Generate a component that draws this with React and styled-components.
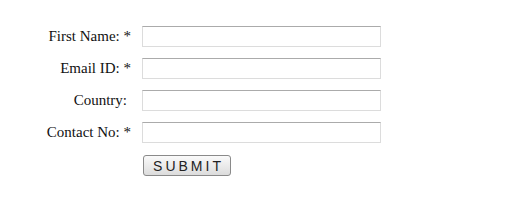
import React from 'react'
import styled, { createGlobalStyle } from 'styled-components'

const Global = createGlobalStyle`
  html, body {
    margin: 0;
    background: #fff;
  }
`

const fields = [
  { label: 'First Name:', required: true },
  { label: 'Email ID:', required: true },
  { label: 'Country:', required: false },
  { label: 'Contact No:', required: true },
]

const App = () => {
  return (
    <Page>
      <Global />
      <Form onSubmit={e => e.preventDefault()}>
        {fields.map(f => (
          <React.Fragment key={f.label}>
            <Label $required={f.required}>
              {f.label}
              {f.required && ' *'}
            </Label>
            <Input type="text" />
          </React.Fragment>
        ))}
        <span />
        <Submit type="submit">SUBMIT</Submit>
      </Form>
    </Page>
  )
}

export default App

const Page = styled.div`
  width: 530px;
  height: 208px;
  padding-top: 26px;
  box-sizing: border-box;
`

const Form = styled.form`
  display: grid;
  grid-template-columns: 131px 239px;
  column-gap: 11px;
  row-gap: 11px;
  align-items: center;
`

const Label = styled.label`
  text-align: right;
  font-family: 'Liberation Serif', 'Times New Roman', serif;
  font-size: 15px;
  color: #111;
  white-space: nowrap;
  padding-right: ${p => (p.$required ? '0' : '4px')};
`

const Input = styled.input`
  height: 21px;
  box-sizing: border-box;
  margin: 0;
  border: 1px solid #dcdcdc;
  border-top-color: #ababab;
  background: #fff;
  padding: 0 3px;
`

const Submit = styled.button`
  justify-self: start;
  margin: 1px 0 0 1px;
  width: 88px;
  height: 21px;
  box-sizing: border-box;
  padding: 0 0 0 3px;
  border: 1px solid #8a8a8a;
  border-radius: 3px;
  background: linear-gradient(#fafafa, #dcdcdc);
  font-family: 'Liberation Sans', Arial, sans-serif;
  font-size: 14px;
  letter-spacing: 3px;
  color: #222;
`
